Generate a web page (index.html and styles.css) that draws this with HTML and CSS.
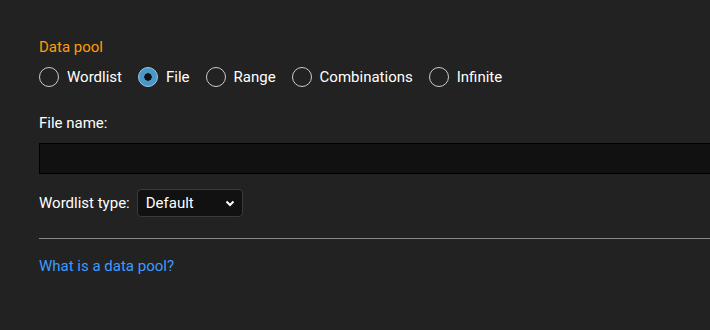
FILE: index.html
```html
<!DOCTYPE html>
<html lang="en">

<head>
    <meta charset="UTF-8">
    <title>Data pool</title>
    <link rel="stylesheet" href="styles.css">
</head>

<body>

    <div class="panel">

        <!-- Tipo de pool -->
        <div class="section-title">Data pool</div>
        <div class="radio-row">
            <label class="radio"><input type="radio" name="pool"> Wordlist</label>
            <label class="radio"><input type="radio" name="pool" checked> File</label>
            <label class="radio"><input type="radio" name="pool"> Range</label>
            <label class="radio"><input type="radio" name="pool"> Combinations</label>
            <label class="radio"><input type="radio" name="pool"> Infinite</label>
        </div>

        <!-- Arquivo -->
        <div class="field-label">File name:</div>
        <input type="text" class="text-input">

        <div class="inline-field">
            <span>Wordlist type:</span>
            <div class="select">
                <span>Default</span>
                <svg width="10" height="7" viewBox="0 0 10 7"><path d="M1.5 1.5 L5 5 L8.5 1.5" stroke="#fff" stroke-width="2" fill="none"/></svg>
            </div>
        </div>

        <hr class="divider">

        <a class="help-link" href="#">What is a data pool?</a>
    </div>

</body>

</html>
```

FILE: styles.css
```css
* {
    box-sizing: border-box;
}

body {
    margin: 0;
    font-family: Roboto, "Liberation Sans", sans-serif;
    background-color: #222;
    color: #fff;
    overflow: hidden;
    height: 330px;
}

.panel {
    width: 100%;
    padding: 38px 0 0 39px;
}

.section-title {
    color: #ff9c0a;
    font-size: 15px;
    line-height: 18px;
}

.radio-row {
    display: flex;
    align-items: center;
    gap: 16px;
    margin-top: 11px;
    font-size: 15px;
}

.radio {
    display: flex;
    align-items: center;
    gap: 8px;
}

.radio input {
    appearance: none;
    margin: 0;
    width: 20px;
    height: 20px;
    border: 1.5px solid #ccc;
    border-radius: 50%;
}

.radio input:checked {
    background-color: #4a98c8;
    border-color: #9cc8e4;
    box-shadow: inset 0 0 0 5px #4a98c8;
    background-image: radial-gradient(circle, #111 0 3.5px, transparent 4px);
}

.field-label {
    margin-top: 27px;
    font-size: 15px;
}

.text-input {
    display: block;
    width: 100%;
    height: 31px;
    margin-top: 11px;
    background-color: #111;
    border: 1px solid #000;
    border-right: none;
    outline: none;
}

.inline-field {
    display: flex;
    align-items: center;
    gap: 7px;
    margin-top: 15px;
    font-size: 15px;
}

.select {
    display: flex;
    align-items: center;
    justify-content: space-between;
    width: 106px;
    height: 28px;
    padding: 0 7px 0 8px;
    background-color: #111;
    border: 1px solid #3a3a3a;
    border-radius: 4px;
}

.divider {
    margin: 21px 0 0;
    border: none;
    border-top: 1px solid #888;
}

.help-link {
    display: block;
    margin-top: 18px;
    color: #3d9bff;
    font-size: 15px;
    text-decoration: none;
}
```
